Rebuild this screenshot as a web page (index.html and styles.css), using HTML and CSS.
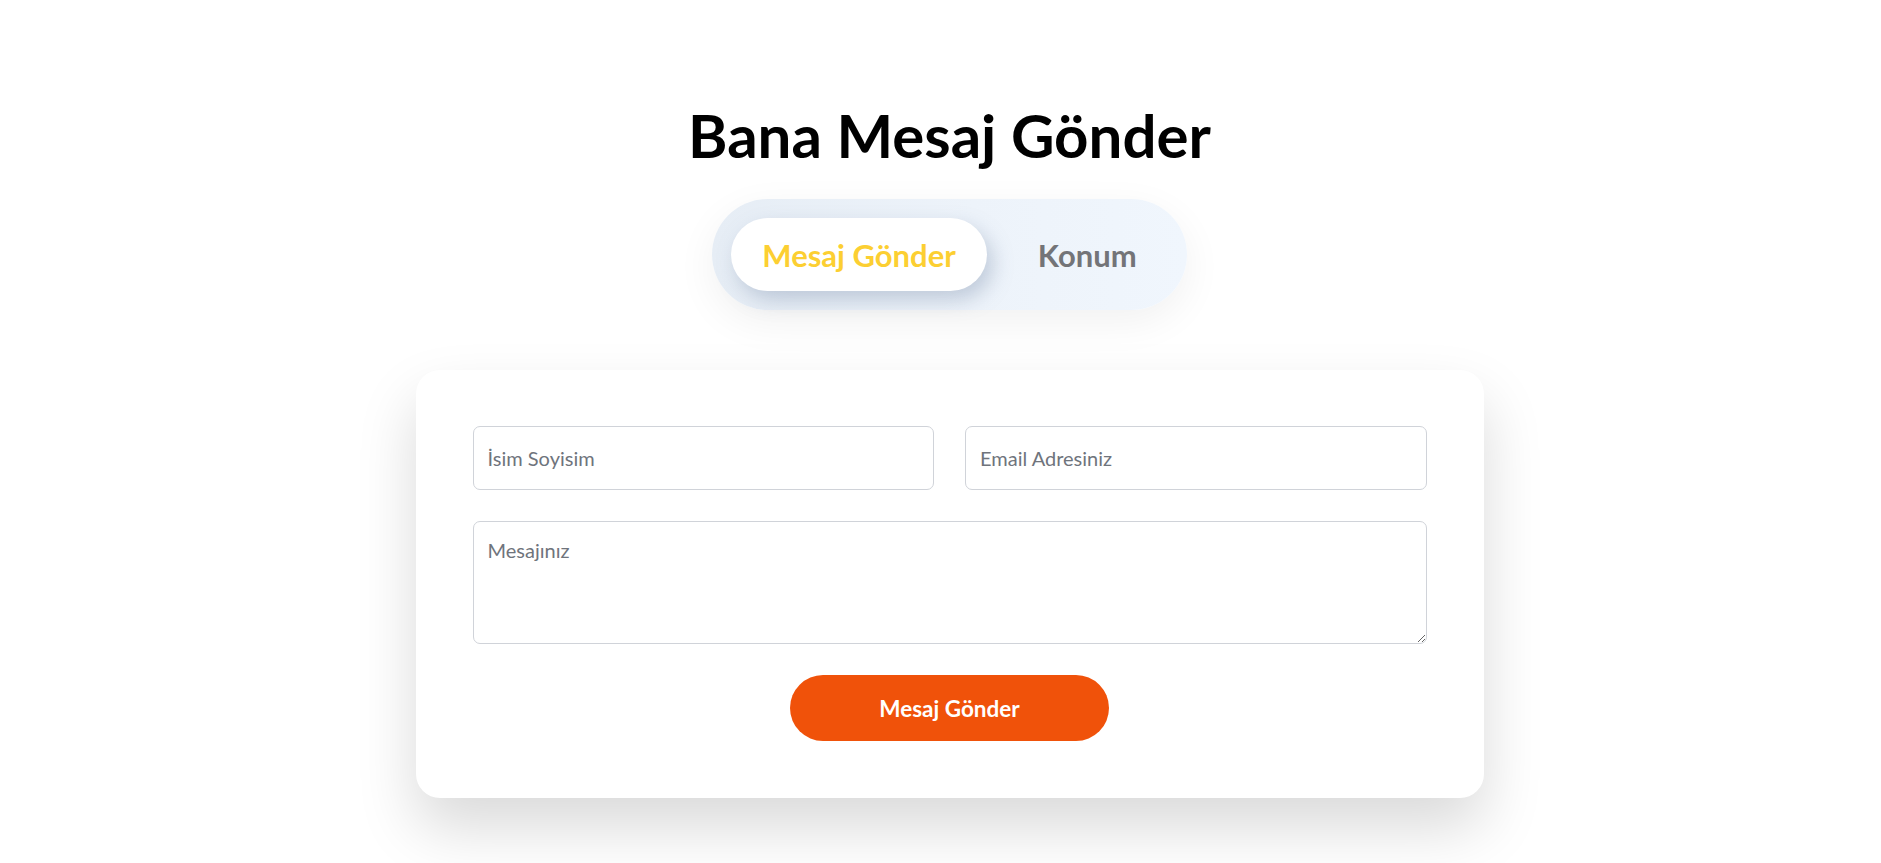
FILE: index.html
```html
<!DOCTYPE html>
<html lang="tr">
<head>
<meta charset="utf-8">
<title>Bana Mesaj Gönder</title>
<link rel="stylesheet" href="styles.css">
</head>
<body>
<main class="page">
  <h1 class="title">Bana Mesaj Gönder</h1>
  <div class="tabs">
    <button class="tab tab-active" type="button">Mesaj Gönder</button>
    <button class="tab" type="button">Konum</button>
  </div>
  <form class="card">
    <div class="row">
      <input class="field" type="text" placeholder="İsim Soyisim">
      <input class="field" type="email" placeholder="Email Adresiniz">
    </div>
    <textarea class="field area" placeholder="Mesajınız"></textarea>
    <button class="send" type="button">Mesaj Gönder</button>
  </form>
</main>
</body>
</html>
```

FILE: styles.css
```css
* { box-sizing: border-box; }
html, body { margin: 0; background: #ffffff; }
body { font-family: "Lato", "Noto Sans", sans-serif; color: #000; }

.page {
  display: flex;
  flex-direction: column;
  align-items: center;
  min-height: 863px;
  padding: 99px 0 65px 18px;
}

.title {
  margin: 0;
  font-size: 60px;
  line-height: 1.2;
  font-weight: 700;
  letter-spacing: 0;
}

.tabs {
  margin-top: 28px;
  display: flex;
  gap: 20px;
  padding: 19px;
  border-radius: 56px;
  background: linear-gradient(90deg, #e6edf5 0%, #edf3fa 55%, #f0f6fd 100%);
  box-shadow: 0 12px 40px rgba(0, 0, 0, 0.06);
}

.tab {
  height: 73px;
  padding: 0 31px;
  border: 0;
  border-radius: 37px;
  background: transparent;
  font-family: inherit;
  font-size: 31px;
  font-weight: 700;
  color: #737478;
  cursor: pointer;
}

.tab-active {
  background: #ffffff;
  color: #fccf32;
  box-shadow: 6px 9px 20px rgba(110, 130, 160, 0.35);
}

.card {
  margin-top: 60px;
  width: 1068px;
  padding: 56px 57px 57px;
  background: #ffffff;
  border-radius: 24px;
  box-shadow: 0 30px 60px rgba(0, 0, 0, 0.15);
  display: flex;
  flex-direction: column;
  align-items: center;
  gap: 31px;
}

.row {
  width: 100%;
  display: grid;
  grid-template-columns: 1fr 1fr;
  gap: 31px;
}

.field {
  width: 100%;
  height: 64px;
  padding: 0 14px;
  border: 1px solid #d0d3d9;
  border-radius: 7px;
  background: #ffffff;
  font-family: inherit;
  font-size: 20px;
  color: #333;
  outline: none;
}

.field::placeholder { color: #6f747c; }

.area {
  height: 123px;
  padding: 16px 14px;
  resize: vertical;
  display: block;
}

.send {
  width: 319px;
  height: 66px;
  border: 0;
  border-radius: 33px;
  background: #f0520a;
  color: #ffffff;
  font-family: inherit;
  font-size: 22.5px;
  font-weight: 700;
  cursor: pointer;
}
```
